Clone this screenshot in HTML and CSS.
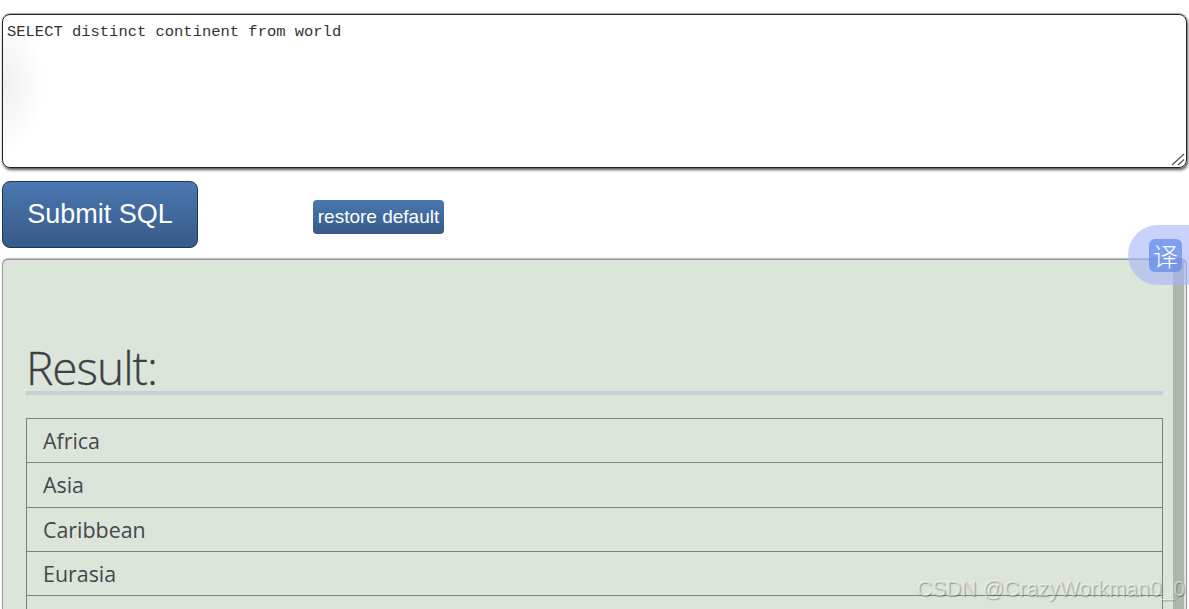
FILE: index.html
```html
<!DOCTYPE html>
<html lang="en">
<head>
    <meta charset="UTF-8">
    <title>SQL</title>
    <link rel="stylesheet" href="styles.css">
</head>
<body>
    <div class="editor">
        <textarea class="sql" spellcheck="false">SELECT distinct continent from world</textarea>
        <svg class="grip" width="14" height="14" viewBox="0 0 14 14">
            <path d="M1 13L13 2M7 13L13 7.5" stroke="#555" stroke-width="1.3" fill="none"/>
        </svg>
    </div>
    <div class="actions">
        <button class="btn submit">Submit SQL</button>
        <button class="btn restore">restore default</button>
    </div>
    <div class="panel">
        <div class="content">
            <h2>Result:</h2>
            <ul class="rows">
                <li>Africa</li>
                <li>Asia</li>
                <li>Caribbean</li>
                <li>Eurasia</li>
                <li></li>
            </ul>
        </div>
        <div class="scrollbar"></div>
    </div>
    <div class="translate"><span class="translate-icon">译</span></div>
    <div class="watermark">CSDN @CrazyWorkman0_0</div>
</body>
</html>
```

FILE: styles.css
```css
html, body { margin: 0; height: 609px; overflow: hidden; background: #fff; }
body { padding: 14px 2px 0 2px; box-sizing: border-box; font-family: "Open Sans", "Noto Sans", sans-serif; color: #44484c; position: relative; }
.editor { position: relative; height: 154px; }
.sql { display: block; box-sizing: border-box; width: 100%; height: 154px; margin: 0; padding: 7px 4px; border: 1px solid #222; border-radius: 8px; box-shadow: 1px 2px 3px #555, 0 -1px 1px #aaa; background: radial-gradient(ellipse 42px 70px at 0 45%, #f0f0f0, #fff); color: #333; font-family: "Liberation Mono", monospace; font-size: 15.47px; line-height: 20px; outline: none; resize: none; }
.grip { position: absolute; right: 2px; bottom: 2px; }
.actions { display: flex; align-items: center; margin-top: 13px; height: 67px; }
.btn { color: #fff; background: linear-gradient(#4a78b0, #375a88); font-family: "Liberation Sans", Arial, sans-serif; padding: 0; }
.submit { width: 196px; height: 67px; font-size: 27px; border: 1px solid #1c3557; border-radius: 8px; }
.restore { width: 131px; height: 34px; margin-left: 115px; margin-top: 5px; font-size: 19px; border: none; border-radius: 4px; }
.panel { display: flex; box-sizing: border-box; height: 350px; overflow: hidden; margin-top: 11px; background: #dce5da; border: 1px solid #999; border-bottom: none; border-radius: 6px 6px 0 0; box-shadow: 0 -1px 1px #bbb; }
.content { width: 1160px; padding-left: 23px; box-sizing: border-box; }
h2 { box-sizing: border-box; margin: 73px 0 23px 0; font-weight: 300; font-size: 46px; letter-spacing: -1px; line-height: 68px; height: 62px; border-bottom: 4px solid #c8ccd3; color: #3c4043; -webkit-text-stroke: 0.3px #3c4043; }
.rows { list-style: none; margin: 0; padding: 0; border: 1px solid #808080; border-bottom: none; }
.rows li { box-sizing: border-box; height: 44.3px; padding-left: 16px; font-size: 21.4px; line-height: 43px; border-bottom: 1px solid #808080; }
.scrollbar { width: 11px; margin-left: 10px; background: #aeb6ac; }
.translate { position: absolute; top: 225px; right: 0; width: 61px; height: 60px; box-sizing: border-box; padding: 14px 0 0 21px; border-radius: 30px 0 0 30px; background: rgba(165, 180, 248, 0.6); }
.translate-icon { display: block; width: 33px; height: 33px; border-radius: 6px; background: rgba(100, 140, 235, 0.75); color: #fff; font-family: "Noto Sans CJK SC", sans-serif; font-size: 25px; font-weight: 300; line-height: 33px; text-align: center; }
.watermark { position: absolute; top: 575px; right: 4px; font-family: "Liberation Sans", Arial, sans-serif; font-size: 21.2px; line-height: 27px; color: rgba(255, 255, 255, 0.5); text-shadow: 1px 1px 1px rgba(0, 0, 0, 0.3); }
```
